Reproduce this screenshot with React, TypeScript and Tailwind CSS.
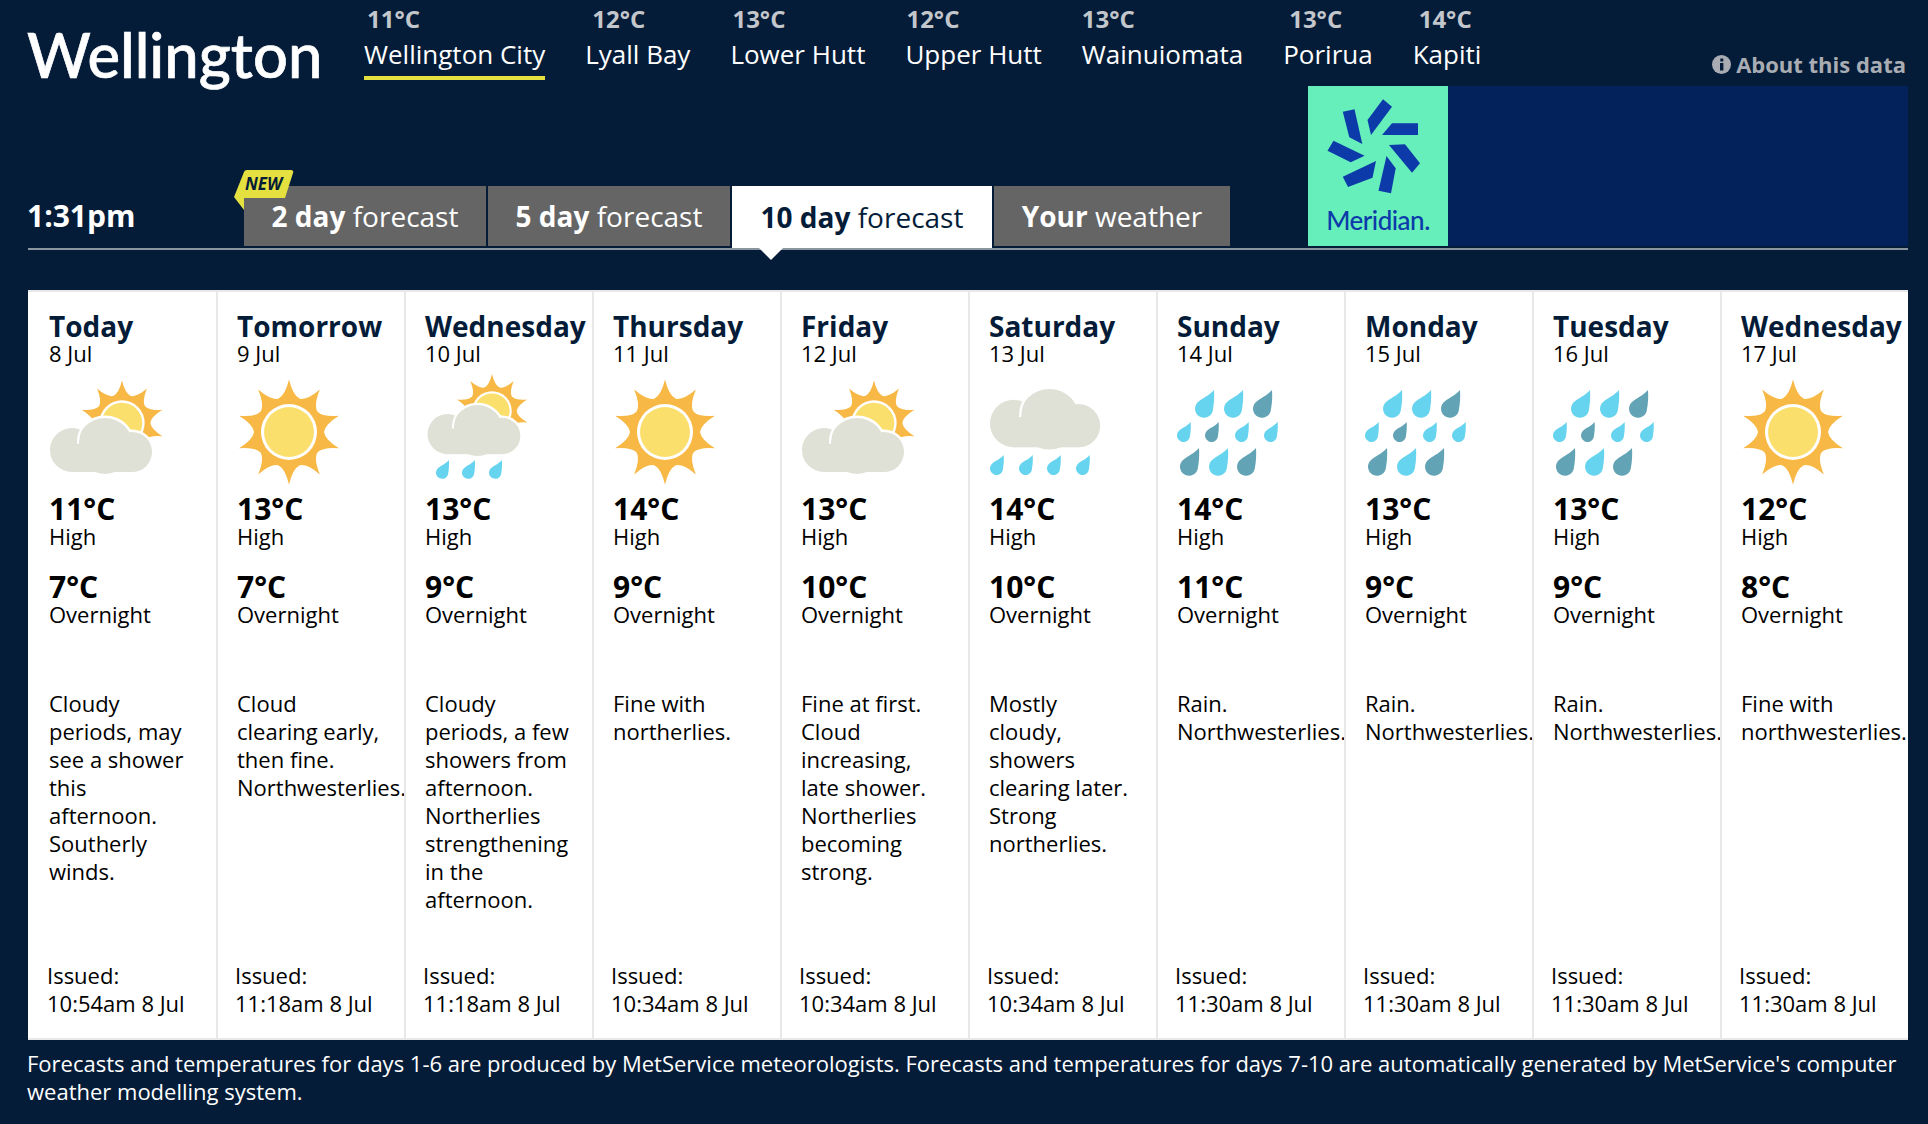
import React from "react";

const ORANGE = "#f7b845";
const YELLOW = "#fbdf6d";
const CLOUD = "#dfe1d6";
const CYAN = "#67d4ef";
const TEAL = "#62a3b5";

function sunPath(cx: number, cy: number, R: number, r: number) {
  let d = "";
  const p = (deg: number, rad: number) => {
    const a = (deg * Math.PI) / 180;
    return `${(cx + rad * Math.cos(a)).toFixed(2)} ${(cy + rad * Math.sin(a)).toFixed(2)}`;
  };
  for (let i = 0; i < 10; i++) {
    const a = i * 36 - 90;
    if (i === 0) d += `M${p(a - 18, r)} `;
    d += `Q${p(a - 6, r * 1.05)} ${p(a, R)} Q${p(a + 6, r * 1.05)} ${p(a + 18, r)} `;
  }
  return d + "Z";
}

function Sun({ cx, cy, R }: { cx: number; cy: number; R: number }) {
  const k = R / 52.5;
  return (
    <g>
      <path d={sunPath(cx, cy, R, 35 * k)} fill={ORANGE} />
      <circle cx={cx} cy={cy} r={28 * k} fill="#fff" />
      <circle cx={cx} cy={cy} r={25 * k} fill={YELLOW} />
    </g>
  );
}

function Cloud({ x, y, s = 1 }: { x: number; y: number; s?: number }) {
  const parts = (
    <>
      <circle cx="22" cy="32" r="22" />
      <circle cx="55" cy="28" r="28" />
      <circle cx="82" cy="34" r="20" />
      <rect x="22" y="28" width="60" height="26" />
    </>
  );
  return (
    <g transform={`translate(${x} ${y}) scale(${s})`}>
      <g fill="#fff" stroke="#fff" strokeWidth="5">{parts}</g>
      <g fill={CLOUD}>{parts}</g>
      <path d="M28 25 C28 18 30 12 34 7" stroke="#fff" strokeWidth="2.2" fill="none" strokeLinecap="round" />
    </g>
  );
}

function Drop({ x, y, s = 1, c = CYAN }: { x: number; y: number; s?: number; c?: string }) {
  return (
    <path
      transform={`translate(${x} ${y}) scale(${s})`}
      fill={c}
      d="M19 0 C19.5 7 19 14 18 19 A9 9 0 1 1 2.5 12.5 C7 8 14 6 19 0Z"
    />
  );
}

function Icon({ kind }: { kind: string }) {
  return (
    <svg width="120" height="120" viewBox="0 0 120 120" className="block">
      {kind === "sun" && <Sun cx={52} cy={62} R={52.5} />}
      {kind === "partly" && (
        <>
          <Sun cx={73} cy={53} R={42.5} />
          <Cloud x={1} y={48} />
        </>
      )}
      {kind === "partlyrain" && (
        <>
          <Sun cx={67} cy={41} R={37} />
          <Cloud x={2.5} y={35} s={0.91} />
          <Drop x={11} y={90} s={0.68} />
          <Drop x={37} y={90} s={0.68} />
          <Drop x={64} y={90} s={0.68} />
        </>
      )}
      {kind === "cloudrain" && (
        <>
          <Cloud x={1} y={19} s={1.08} />
          <Drop x={1} y={85} s={0.72} />
          <Drop x={30} y={85} s={0.72} />
          <Drop x={58} y={85} s={0.72} />
          <Drop x={87} y={85} s={0.72} />
        </>
      )}
      {kind === "rain" && (
        <>
          <Drop x={18} y={20} />
          <Drop x={47} y={20} />
          <Drop x={76} y={20} c={TEAL} />
          <Drop x={0} y={52} s={0.72} />
          <Drop x={28} y={52} s={0.72} c={TEAL} />
          <Drop x={58} y={52} s={0.72} />
          <Drop x={87} y={52} s={0.72} />
          <Drop x={3} y={78} c={TEAL} />
          <Drop x={32} y={78} />
          <Drop x={60} y={78} c={TEAL} />
        </>
      )}
    </svg>
  );
}

const places = [
  { t: "11°C", n: "Wellington City", o: "pl-[3px]", a: true },
  { t: "12°C", n: "Lyall Bay", o: "pl-[7px]" },
  { t: "13°C", n: "Lower Hutt", o: "pl-[2px]" },
  { t: "12°C", n: "Upper Hutt", o: "pl-[1px]" },
  { t: "13°C", n: "Wainuiomata", o: "pl-0" },
  { t: "13°C", n: "Porirua", o: "pl-[6px]" },
  { t: "14°C", n: "Kapiti", o: "pl-[6px]" },
];

const days = [
  { d: "Today", dt: "8 Jul", i: "partly", hi: "11°C", lo: "7°C", txt: "Cloudy\nperiods, may\nsee a shower\nthis\nafternoon.\nSoutherly\nwinds.", is: "10:54am 8 Jul" },
  { d: "Tomorrow", dt: "9 Jul", i: "sun", hi: "13°C", lo: "7°C", txt: "Cloud\nclearing early,\nthen fine.\nNorthwesterlies.", is: "11:18am 8 Jul" },
  { d: "Wednesday", dt: "10 Jul", i: "partlyrain", hi: "13°C", lo: "9°C", txt: "Cloudy\nperiods, a few\nshowers from\nafternoon.\nNortherlies\nstrengthening\nin the\nafternoon.", is: "11:18am 8 Jul" },
  { d: "Thursday", dt: "11 Jul", i: "sun", hi: "14°C", lo: "9°C", txt: "Fine with\nnortherlies.", is: "10:34am 8 Jul" },
  { d: "Friday", dt: "12 Jul", i: "partly", hi: "13°C", lo: "10°C", txt: "Fine at first.\nCloud\nincreasing,\nlate shower.\nNortherlies\nbecoming\nstrong.", is: "10:34am 8 Jul" },
  { d: "Saturday", dt: "13 Jul", i: "cloudrain", hi: "14°C", lo: "10°C", txt: "Mostly\ncloudy,\nshowers\nclearing later.\nStrong\nnortherlies.", is: "10:34am 8 Jul" },
  { d: "Sunday", dt: "14 Jul", i: "rain", hi: "14°C", lo: "11°C", txt: "Rain.\nNorthwesterlies.", is: "11:30am 8 Jul" },
  { d: "Monday", dt: "15 Jul", i: "rain", hi: "13°C", lo: "9°C", txt: "Rain.\nNorthwesterlies.", is: "11:30am 8 Jul" },
  { d: "Tuesday", dt: "16 Jul", i: "rain", hi: "13°C", lo: "9°C", txt: "Rain.\nNorthwesterlies.", is: "11:30am 8 Jul" },
  { d: "Wednesday", dt: "17 Jul", i: "sun", hi: "12°C", lo: "8°C", txt: "Fine with\nnorthwesterlies.", is: "11:30am 8 Jul" },
];

function Tab({ b, r, active, w }: { b: string; r?: string; active?: boolean; w: string }) {
  return (
    <div
      className={
        active
          ? `${w} h-[62px] bg-white text-[#041c38] flex items-center justify-center text-[28px]`
          : `${w} h-[60px] mb-[2px] bg-[#656565] text-white flex items-center justify-center text-[28px]`
      }
    >
      <span className="whitespace-nowrap">
        <b className="font-bold">{b}</b>
        {r ? " " + r : ""}
      </span>
    </div>
  );
}

function MeridianMark() {
  const blades = [
    "75,13.3 84,20.7 63,49 59.5,34",
    "84,37.3 110,37.3 110,49 74,49",
    "81,59 97,58.3 112,77.3 104,86.7",
    "78.5,70 87.7,82.3 83,107.3 70.5,104.7",
    "68,75 64.5,91.7 40,101 34.8,90.7",
    "56.6,69.7 42.7,76.3 19.5,64.7 25.5,54.7",
    "34.8,25.7 46.5,23.3 54.3,58 41.3,51.3",
  ];
  return (
    <svg width="140" height="120" viewBox="0 0 140 120" className="block">
      {blades.map((p) => (
        <polygon key={p} points={p} fill="#0d3aa9" />
      ))}
    </svg>
  );
}

export default function App() {
  return (
    <div className="w-[1928px] h-[1124px] bg-[#041c38] overflow-hidden font-['Open_Sans',sans-serif] text-white">
      <div className="pl-[28px] pr-[20px]">
        <div className="h-[86px] flex items-start relative">
          <div className="font-['Lato',sans-serif] font-medium text-[61.5px] leading-[72px] mt-[18px] ml-[-1px] w-[337px] whitespace-nowrap [-webkit-text-stroke:0.7px_white]">
            Wellington
          </div>
          <div className="flex gap-[40px]">
            {places.map((p) => (
              <div key={p.n} className="pt-[5px]">
                <div className={`${p.o} text-[24px] leading-[28px] font-bold text-[#c3c7cc]`}>{p.t}</div>
                <div
                  className={
                    p.a
                      ? "text-[26px] leading-[34px] mt-[4px] pb-[5px] border-b-[4px] border-[#e4e040] whitespace-nowrap"
                      : "text-[26px] leading-[34px] mt-[4px] whitespace-nowrap"
                  }
                >
                  {p.n}
                </div>
              </div>
            ))}
          </div>
          <div className="ml-auto mr-[2px] mt-[51px] flex items-center gap-[5px] text-[22px] leading-[26px] font-bold text-[#a9adb3] whitespace-nowrap">
            <svg width="19" height="19" viewBox="0 0 19 19">
              <circle cx="9.5" cy="9.5" r="9.5" fill="#a9adb3" />
              <rect x="8" y="8" width="3.4" height="7.5" fill="#041c38" />
              <rect x="8.3" y="3.5" width="3" height="3" fill="#041c38" />
            </svg>
            About this data
          </div>
        </div>

        <div className="h-[162px] flex items-end">
          <div className="w-[216px] ml-[-1px] mr-[1px] mb-[13px] text-[30px] leading-[38px] font-bold whitespace-nowrap">1:31pm</div>
          <div className="flex gap-[2px] relative">
            <div className="absolute left-[-10px] top-[-16px] w-[60px] h-[40px]">
              <svg width="60" height="40" viewBox="0 0 60 40" className="absolute inset-0">
                <path d="M10 2 Q10.5 0 13 0 L57 0 Q60 0 59 3 L51 28 L10 28 L10 40 L0 27 Z" fill="#e3e040" />
              </svg>
              <span className="absolute left-[11px] top-[3px] text-[17px] leading-[22px] font-bold italic text-[#041c38]">NEW</span>
            </div>
            <Tab b="2 day" r="forecast" w="w-[242px]" />
            <Tab b="5 day" r="forecast" w="w-[242px]" />
            <Tab b="10 day" r="forecast" w="w-[260px]" active />
            <Tab b="Your" r="weather" w="w-[236px]" />
          </div>
          <div className="ml-[78px] mb-[2px] flex h-[160px] flex-1">
            <div className="w-[140px] bg-[#66eebb] text-[#0d3aa9]">
              <MeridianMark />
              <div className="font-['Lato',sans-serif] font-medium text-center text-[26px] leading-[28px] tracking-[-0.5px]">Meridian.</div>
            </div>
            <div className="flex-1 bg-[#03215a]" />
          </div>
        </div>

        <div className="h-[2px] bg-[#8a95a0] relative">
          <svg width="24" height="12" viewBox="0 0 24 12" className="absolute left-[731px] top-[0px]">
            <path d="M0 0 L24 0 L12 12 Z" fill="#fff" />
          </svg>
        </div>

        <div className="mt-[40px] w-[1880px] h-[750px] bg-white border-y-2 border-[#e8e8e8] grid grid-cols-10 text-black">
          {days.map((c, i) => (
            <div
              key={i}
              className={
                i === 0
                  ? "flex flex-col pl-[21px] pt-[19px] pb-[21px]"
                  : "flex flex-col pl-[19px] pt-[19px] pb-[21px] border-l-2 border-[#e8e8e8]"
              }
            >
              <div className="text-[28px] leading-[30px] font-bold text-[#041c38] whitespace-nowrap">{c.d}</div>
              <div className="text-[22px] leading-[24px]">{c.dt}</div>
              <div className="mt-[5px] h-[120px]">
                <Icon kind={c.i} />
              </div>
              <div className="mt-[4px] text-[30px] leading-[30px] font-bold">{c.hi}</div>
              <div className="text-[22px] leading-[25px]">High</div>
              <div className="mt-[23px] text-[30px] leading-[30px] font-bold">{c.lo}</div>
              <div className="text-[22px] leading-[25px]">Overnight</div>
              <div className="mt-[62px] text-[22px] leading-[28px] whitespace-pre">{c.txt}</div>
              <div className="mt-auto ml-[-2px] text-[22px] leading-[28px] whitespace-nowrap">
                Issued:
                <br />
                {c.is}
              </div>
            </div>
          ))}
        </div>

        <div className="mt-[9px] ml-[-1px] text-[22px] leading-[28px]">
          Forecasts and temperatures for days 1-6 are produced by MetService meteorologists. Forecasts and temperatures for days 7-10 are automatically generated by MetService's computer weather modelling system.
        </div>
      </div>
    </div>
  );
}
